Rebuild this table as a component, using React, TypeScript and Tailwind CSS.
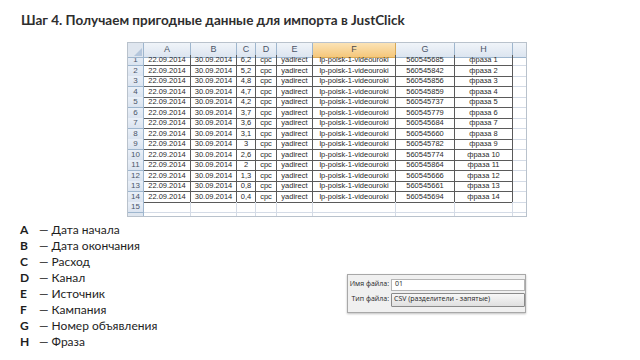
import { Fragment } from "react";

const cols = ["A", "B", "C", "D", "E", "F", "G", "H"];

const rows: [string, string][] = [
  ["6,2", "560545685"],
  ["5,2", "560545842"],
  ["4,8", "560545856"],
  ["4,7", "560545859"],
  ["4,2", "560545737"],
  ["3,7", "560545779"],
  ["3,6", "560545684"],
  ["3,1", "560545660"],
  ["3", "560545782"],
  ["2,6", "560545774"],
  ["2", "560545864"],
  ["1,3", "560545666"],
  ["0,8", "560545661"],
  ["0,4", "560545694"],
];

const legend: [string, string][] = [
  ["A", "Дата начала"],
  ["B", "Дата окончания"],
  ["C", "Расход"],
  ["D", "Канал"],
  ["E", "Источник"],
  ["F", "Кампания"],
  ["G", "Номер объявления"],
  ["H", "Фраза"],
];

const gridCols =
  "grid grid-cols-[16px_47px_46px_19px_21px_36px_83px_59px_58px_14px]";

const rowHead =
  "flex items-center justify-center bg-gradient-to-b from-[#eaf0f8] to-[#dbe4f0] border-r border-b border-[#9eb6ce] text-[#4a5568] text-[8px]";
const dataCell =
  "flex items-center justify-center border-r border-b border-[#5a5a5a] text-[#2a2a2a] whitespace-nowrap overflow-hidden";
const emptyCell = "border-r border-b border-[#d4dbe6]";

const Sheet = () => (
  <div
    className="w-[400px] border border-[#b9c2cc] bg-white overflow-hidden text-[7.5px]"
    style={{ fontFamily: '"Liberation Sans", Arial, sans-serif' }}
  >
    <div className={`${gridCols} h-[12px]`}>
      <div className="relative bg-[#dfe6ef] border-r border-b border-[#9eb6ce]">
        <div className="absolute right-[1px] bottom-[1px] w-0 h-0 border-l-[8px] border-l-transparent border-b-[8px] border-b-[#b4c6dc]" />
      </div>
      {cols.map((c) => (
        <div
          key={c}
          className={
            c === "F"
              ? "flex items-center justify-center bg-gradient-to-b from-[#fbe3b6] to-[#f5c77a] border-r border-b border-[#d8a956] text-[#4a4a4a] text-[9px]"
              : "flex items-center justify-center bg-gradient-to-b from-[#f0f4f9] to-[#dce5f0] border-r border-b border-[#9eb6ce] text-[#4a5568] text-[9px]"
          }
        >
          {c}
        </div>
      ))}
      <div className="bg-gradient-to-b from-[#f0f4f9] to-[#dce5f0] border-b border-[#9eb6ce]" />
    </div>

    {rows.map(([cost, id], i) => (
      <div key={i} className={`${gridCols} h-[10.5px] leading-[10px]`}>
        <div className={rowHead}>{i + 1}</div>
        <div className={dataCell}>22.09.2014</div>
        <div className={dataCell}>30.09.2014</div>
        <div className={dataCell}>{cost}</div>
        <div className={dataCell}>cpc</div>
        <div className={dataCell}>yadirect</div>
        <div className={dataCell}>lp-poisk-1-videouroki</div>
        <div className={dataCell}>{id}</div>
        <div className={dataCell}>фраза {i + 1}</div>
        <div className="border-b border-[#d4dbe6]" />
      </div>
    ))}

    <div className={`${gridCols} h-[10.5px] leading-[10px]`}>
      <div className={rowHead}>15</div>
      {cols.map((c) => (
        <div key={c} className={emptyCell} />
      ))}
      <div className="border-b border-[#d4dbe6]" />
    </div>
    <div className={`${gridCols} h-[3px]`}>
      <div className="bg-[#dfe6ef] border-r border-[#9eb6ce]" />
      {cols.map((c) => (
        <div key={c} className="border-r border-[#d4dbe6]" />
      ))}
      <div />
    </div>
  </div>
);

const SaveBox = () => (
  <div
    className="w-[179px] h-[39px] bg-[#f0f0f0] border border-[#a8a8a8] shadow-[0_1px_2px_rgba(0,0,0,0.25)] pt-[4px] flex flex-col gap-[2px] text-[7px] text-[#1e1e1e]"
    style={{ fontFamily: '"Open Sans", "Liberation Sans", sans-serif' }}
  >
    <div className="flex items-center h-[12px]">
      <span className="w-[43px] text-right pr-[2px]">Имя файла:</span>
      <div className="flex-1 h-[12px] bg-white border border-[#b5b5b5] pl-[3px] flex items-center">
        01
      </div>
    </div>
    <div className="flex items-center h-[14px]">
      <span className="w-[43px] text-right pr-[2px]">Тип файла:</span>
      <div className="flex-1 h-[14px] bg-gradient-to-b from-[#f7f7f7] to-[#e0e0e0] border border-[#8a8a8a] rounded-[1px] pl-[2px] flex items-center">
        CSV (разделители - запятые)
      </div>
    </div>
  </div>
);

export default function App() {
  return (
    <div
      className="w-[640px] h-[360px] bg-white overflow-hidden"
      style={{ fontFamily: 'Lato, "Open Sans", sans-serif' }}
    >
      <h1 className="pl-[21px] pt-[10px] h-[30px] leading-[20px] text-[13.5px] font-bold text-[#2e2e2e]">
        Шаг 4. Получаем пригодные данные для импорта в JustClick
      </h1>
      <div className="mt-[12px] ml-[127px]">
        <Sheet />
      </div>
      <div className="flex mt-[5px]">
        <div className="w-[347px] pl-[20px] grid grid-cols-[19px_auto] content-start text-[12px] leading-[16px] text-[#1e1e1e]">
          {legend.map(([k, v]) => (
            <Fragment key={k}>
              <span className="font-bold">{k}</span>
              <span>— {v}</span>
            </Fragment>
          ))}
        </div>
        <div className="mt-[52px]">
          <SaveBox />
        </div>
      </div>
    </div>
  );
}
